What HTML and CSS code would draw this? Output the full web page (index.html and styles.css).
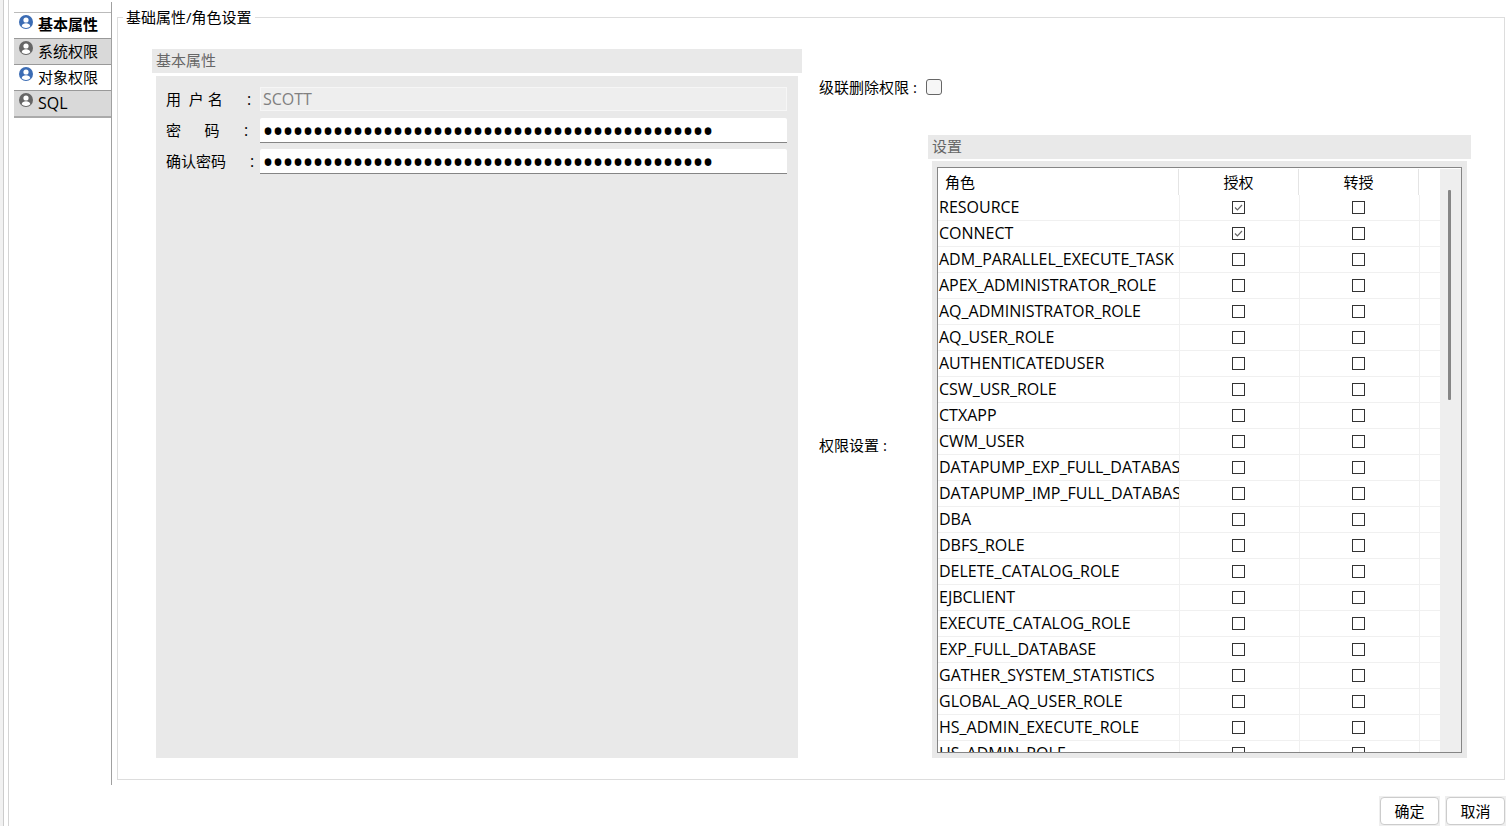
FILE: index.html
```html
<!DOCTYPE html>
<html lang="zh">
<head>
<meta charset="utf-8">
<title>基础属性/角色设置</title>
<link rel="stylesheet" href="styles.css">
</head>
<body>
<div class="frame">
  <div class="edge"></div>
  <div class="main">
    <nav class="tabs">
      <div class="tabs-top"></div>
      <div class="tab tab-active"><svg class="ico ico-blue" viewBox="0 0 14 14"><circle cx="7" cy="7" r="7"/><circle class="fg" cx="7" cy="5" r="2.6"/><path class="fg" d="M2.6 11.2C3.2 9.2 4.8 8.3 7 8.3s3.8.9 4.4 2.9A6 6 0 0 1 7 13a6 6 0 0 1-4.4-1.8z"/></svg><span>基本属性</span></div>
      <div class="tab tab-gray"><svg class="ico ico-gray" viewBox="0 0 14 14"><circle cx="7" cy="7" r="7"/><circle class="fg" cx="7" cy="5" r="2.6"/><path class="fg" d="M2.6 11.2C3.2 9.2 4.8 8.3 7 8.3s3.8.9 4.4 2.9A6 6 0 0 1 7 13a6 6 0 0 1-4.4-1.8z"/></svg><span>系统权限</span></div>
      <div class="tab"><svg class="ico ico-blue" viewBox="0 0 14 14"><circle cx="7" cy="7" r="7"/><circle class="fg" cx="7" cy="5" r="2.6"/><path class="fg" d="M2.6 11.2C3.2 9.2 4.8 8.3 7 8.3s3.8.9 4.4 2.9A6 6 0 0 1 7 13a6 6 0 0 1-4.4-1.8z"/></svg><span>对象权限</span></div>
      <div class="tab tab-gray tab-last"><svg class="ico ico-gray" viewBox="0 0 14 14"><circle cx="7" cy="7" r="7"/><circle class="fg" cx="7" cy="5" r="2.6"/><path class="fg" d="M2.6 11.2C3.2 9.2 4.8 8.3 7 8.3s3.8.9 4.4 2.9A6 6 0 0 1 7 13a6 6 0 0 1-4.4-1.8z"/></svg><span class="latin">SQL</span></div>
    </nav>
    <div class="content">
      <fieldset class="group">
        <legend>基础属性/角色设置</legend>
        <div class="group-body">
          <section class="basic">
            <h2 class="bar">基本属性</h2>
            <div class="basic-body">
              <div class="form-row"><span class="lab lab-user">用&nbsp;&nbsp;户&nbsp;名</span><span class="colon">:</span><input class="field field-ro" type="text" value="SCOTT" readonly></div>
              <div class="form-row"><span class="lab lab-pass">密&nbsp;&nbsp;&nbsp;&nbsp;&nbsp;&nbsp;码</span><span class="colon">:</span><input class="field field-pw" type="password" value="123456789012345678901234567890123456789012345"></div>
              <div class="form-row"><span class="lab lab-conf">确认密码</span><span class="colon">:</span><input class="field field-pw" type="password" value="123456789012345678901234567890123456789012345"></div>
            </div>
          </section>
          <section class="side">
            <div class="cascade"><span class="cascade-label">级联删除权限 :</span><input class="cascade-box" type="checkbox"></div>
            <div class="perm">
              <div class="perm-label">权限设置 :</div>
              <div class="perm-main">
                <h2 class="bar">设置</h2>
                <div class="perm-body">
                  <div class="grid-box">
                    <div class="grid-list">
                      <div class="head"><div class="hc hc-role">角色</div><div class="hc">授权</div><div class="hc">转授</div><div class="hc"></div></div>
                      <div class="row"><div class="name">RESOURCE</div><div class="cell"><span class="box"><svg viewBox="0 0 11 11"><path d="M2 5.5l2.4 2.4L9 3"/></svg></span></div><div class="cell"><span class="box"></span></div><div class="cell"></div></div>
                      <div class="row"><div class="name">CONNECT</div><div class="cell"><span class="box"><svg viewBox="0 0 11 11"><path d="M2 5.5l2.4 2.4L9 3"/></svg></span></div><div class="cell"><span class="box"></span></div><div class="cell"></div></div>
                      <div class="row"><div class="name">ADM_PARALLEL_EXECUTE_TASK</div><div class="cell"><span class="box"></span></div><div class="cell"><span class="box"></span></div><div class="cell"></div></div>
                      <div class="row"><div class="name">APEX_ADMINISTRATOR_ROLE</div><div class="cell"><span class="box"></span></div><div class="cell"><span class="box"></span></div><div class="cell"></div></div>
                      <div class="row"><div class="name">AQ_ADMINISTRATOR_ROLE</div><div class="cell"><span class="box"></span></div><div class="cell"><span class="box"></span></div><div class="cell"></div></div>
                      <div class="row"><div class="name">AQ_USER_ROLE</div><div class="cell"><span class="box"></span></div><div class="cell"><span class="box"></span></div><div class="cell"></div></div>
                      <div class="row"><div class="name">AUTHENTICATEDUSER</div><div class="cell"><span class="box"></span></div><div class="cell"><span class="box"></span></div><div class="cell"></div></div>
                      <div class="row"><div class="name">CSW_USR_ROLE</div><div class="cell"><span class="box"></span></div><div class="cell"><span class="box"></span></div><div class="cell"></div></div>
                      <div class="row"><div class="name">CTXAPP</div><div class="cell"><span class="box"></span></div><div class="cell"><span class="box"></span></div><div class="cell"></div></div>
                      <div class="row"><div class="name">CWM_USER</div><div class="cell"><span class="box"></span></div><div class="cell"><span class="box"></span></div><div class="cell"></div></div>
                      <div class="row"><div class="name">DATAPUMP_EXP_FULL_DATABASE</div><div class="cell"><span class="box"></span></div><div class="cell"><span class="box"></span></div><div class="cell"></div></div>
                      <div class="row"><div class="name">DATAPUMP_IMP_FULL_DATABASE</div><div class="cell"><span class="box"></span></div><div class="cell"><span class="box"></span></div><div class="cell"></div></div>
                      <div class="row"><div class="name">DBA</div><div class="cell"><span class="box"></span></div><div class="cell"><span class="box"></span></div><div class="cell"></div></div>
                      <div class="row"><div class="name">DBFS_ROLE</div><div class="cell"><span class="box"></span></div><div class="cell"><span class="box"></span></div><div class="cell"></div></div>
                      <div class="row"><div class="name">DELETE_CATALOG_ROLE</div><div class="cell"><span class="box"></span></div><div class="cell"><span class="box"></span></div><div class="cell"></div></div>
                      <div class="row"><div class="name">EJBCLIENT</div><div class="cell"><span class="box"></span></div><div class="cell"><span class="box"></span></div><div class="cell"></div></div>
                      <div class="row"><div class="name">EXECUTE_CATALOG_ROLE</div><div class="cell"><span class="box"></span></div><div class="cell"><span class="box"></span></div><div class="cell"></div></div>
                      <div class="row"><div class="name">EXP_FULL_DATABASE</div><div class="cell"><span class="box"></span></div><div class="cell"><span class="box"></span></div><div class="cell"></div></div>
                      <div class="row"><div class="name">GATHER_SYSTEM_STATISTICS</div><div class="cell"><span class="box"></span></div><div class="cell"><span class="box"></span></div><div class="cell"></div></div>
                      <div class="row"><div class="name">GLOBAL_AQ_USER_ROLE</div><div class="cell"><span class="box"></span></div><div class="cell"><span class="box"></span></div><div class="cell"></div></div>
                      <div class="row"><div class="name">HS_ADMIN_EXECUTE_ROLE</div><div class="cell"><span class="box"></span></div><div class="cell"><span class="box"></span></div><div class="cell"></div></div>
                      <div class="row"><div class="name">HS_ADMIN_ROLE</div><div class="cell"><span class="box"></span></div><div class="cell"><span class="box"></span></div><div class="cell"></div></div>
                    </div>
                    <div class="scrollbar"><div class="thumb"></div></div>
                  </div>
                </div>
              </div>
            </div>
          </section>
        </div>
      </fieldset>
      <div class="footer">
        <button class="btn" type="button"><span class="btn-face">确定</span></button>
        <button class="btn" type="button"><span class="btn-face">取消</span></button>
      </div>
    </div>
  </div>
</div>
</body>
</html>
```
FILE: styles.css
```css
* { box-sizing: border-box; }
html, body { margin: 0; padding: 0; height: 100%; }
body {
  background: #fff;
  color: #000;
  font: 15px/22px "Open Sans", "Noto Sans CJK SC", sans-serif;
  overflow: hidden;
}
.frame { display: flex; height: 826px; }
.edge { width: 4px; background: #f1f1f1; border-right: 1px solid #ccc; margin-right: 4px; }
.main { flex: 1; display: flex; border-left: 1px solid #d4d4d4; padding-left: 5px; min-width: 0; }

.tabs { width: 98px; height: 783px; margin-top: 2px; border-right: 1px solid #a0a0a0; flex: none; }
.tabs-top { height: 11px; border-bottom: 1px solid #bbb; }
.tab { height: 26px; display: flex; align-items: flex-start; padding-left: 5px; border-bottom: 1px solid #999; background: #fff; }
.tab span { margin-left: 5px; margin-top: 1px; line-height: 22px; font-size: 15px; }
.tab .latin { font-size: 16px; }
.tab-active { font-weight: 700; }
.tab-active span { margin-top: 0; }
.tab-gray { background: #d9d9d9; }
.tab-last { border-bottom: 2px solid #aaa; height: 27px; }
.ico { width: 14px; height: 14px; margin-top: 2px; flex: none; }
.ico .fg { fill: #fff; }
.ico-blue { fill: #3b6cb4; }
.ico-gray { fill: #666; }

.content { flex: 1; margin-left: 5px; min-width: 0; }
.group {
  margin: 6px 0 0;
  padding: 21px 0 0 34px;
  width: 1388px;
  height: 774px;
  border: 1px solid #ddd;
  min-width: 0;
}
.group legend { margin-left: -29px; padding: 0 3px; line-height: 22px; font-size: 15px; height: 22px; }
.group-body { display: flex; gap: 17px; height: 709px; }

.bar { margin: 0; height: 24px; background: #e9e9e9; padding-left: 4px; font-weight: 400; font-size: 15px; line-height: 22px; color: #666; }

.basic { width: 650px; display: flex; flex-direction: column; flex: none; }
.basic-body { flex: 1; margin: 3px 4px 0; background: #e9e9e9; padding: 11px 11px 0 10px; }
.form-row { height: 25px; margin-bottom: 6px; display: flex; align-items: center; }
.lab { white-space: nowrap; margin-bottom: 2px; }
.lab-user { width: 81px; }
.lab-pass { width: 78px; }
.lab-conf { width: 84px; }
.colon { font-size: 16px; margin-bottom: 2px; }
.field { margin-left: auto; align-self: flex-start; width: 527px; height: 24px; border: 0; padding: 0 3px; font: 16px/24px "Open Sans", sans-serif; outline: 0; background: #fff; color: #000; }
.field-ro { background: #eee; border: 1px solid #f6f6f6; padding: 0 2px; color: #808080; }
.field-pw { height: 25px; border-bottom: 1px solid #858585; border-radius: 2px 2px 0 0; font-size: 32px; letter-spacing: -2.03px; padding: 0 0 0 2px; }

.side { flex: 1; min-width: 0; padding-top: 30px; display: flex; flex-direction: column; }
.cascade { height: 16px; display: flex; align-items: center; margin-bottom: 40px; }
.cascade-label { width: 107px; font-size: 15px; white-space: nowrap; }
.cascade-box { appearance: none; margin: 0; width: 16px; height: 16px; border: 1px solid #666; border-radius: 3px; background: #f6f6f6; }
.perm { flex: 1; display: flex; align-items: center; min-height: 0; width: 652px; }
.perm-label { width: 109px; flex: none; padding-bottom: 3px; }
.perm-main { width: 543px; height: 623px; display: flex; flex-direction: column; flex: none; }
.perm-body { flex: 1; margin: 2px 4px 0; background: #e9e9e9; padding: 6px 5px 5px; min-height: 0; }
.grid-box { height: 586px; border: 1px solid #858585; display: flex; overflow: hidden; background: #fff; }
.grid-list { width: 502px; flex: none; padding-top: 1px; }
.head, .row { display: grid; height: 26px; }
.head { grid-template-columns: 241px 120px 120px 21px; }
.row { grid-template-columns: 242px 120px 120px 20px; border-bottom: 1px solid #f0f0f0; }
.hc { text-align: center; border-right: 1px solid #e4e4e4; line-height: 27px; height: 26px; }
.hc-role { text-align: left; padding-left: 7px; }
.hc:last-child { border-right: 0; }
.name { padding-left: 1px; overflow: hidden; white-space: nowrap; font-size: 16px; line-height: 25px; border-right: 1px solid #f0f0f0; }
.cell { display: flex; align-items: center; justify-content: center; border-right: 1px solid #f0f0f0; padding-right: 2px; }
.cell:last-child { border-right: 0; }
.box { width: 13px; height: 13px; border: 1px solid #333; display: block; }
.box svg { display: block; width: 11px; height: 11px; fill: none; stroke: #666; stroke-width: 1.2; }
.scrollbar { flex: 1; background: #eee; margin-top: 1px; }
.thumb { width: 3px; height: 210px; margin: 21px 0 0 8px; background: #868686; border-radius: 1px; }

.footer { display: flex; justify-content: flex-end; gap: 5px; margin-top: 16px; width: 1389px; }
.btn { width: 61px; height: 30px; border: 0; background: #efefef; padding: 1px; font: 15px/26px "Open Sans", "Noto Sans CJK SC", sans-serif; color: #000; }
.btn-face { display: block; height: 28px; background: #fff; border: 1px solid #ccc; border-radius: 4px; }
```
